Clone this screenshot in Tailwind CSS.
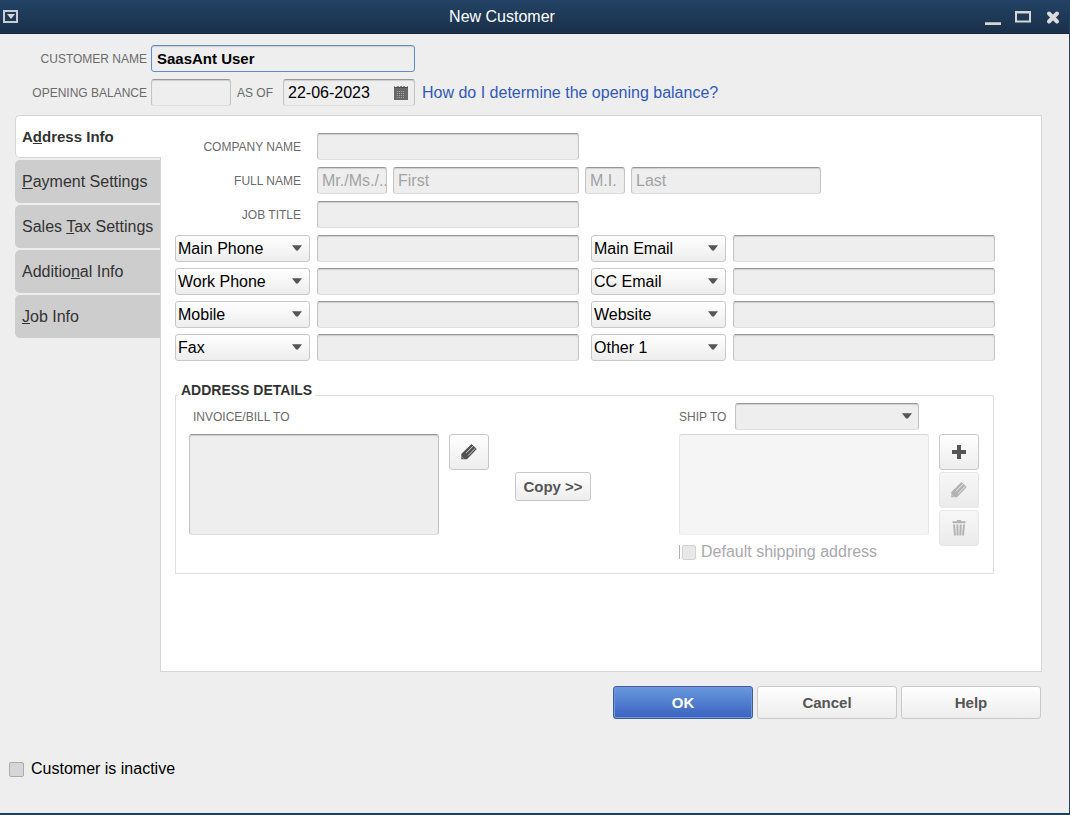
<!DOCTYPE html>
<html lang="en">
<head>
<meta charset="utf-8">
<meta name="viewport" content="width=device-width, initial-scale=1">
<title>New Customer</title>
<script src="https://cdn.jsdelivr.net/npm/@tailwindcss/browser@4"></script>
</head>
<body class="min-h-screen flex flex-col bg-[#eeeeee] border-r border-r-[#20415f] border-b-2 border-b-[#20415f] font-['Liberation_Sans',Arial,sans-serif] text-base leading-5 text-black">
<svg class="hidden" aria-hidden="true">
  <symbol id="arrow" viewBox="0 0 10 6"><path d="M0 .3h10L6.300 5.100Q5 6.300 3.700 5.100z" fill="currentColor"/></symbol>
  <symbol id="pencil" viewBox="0 0 16 16">
    <path d="M10.500 0 15.800 5 6 15.300 .3 15.300 .3 10z" fill="currentColor"/>
    <path d="M5 9.200 11.800 2.300M7.200 11.500 14 4.500" stroke="#f6f6f6" stroke-width=".8" fill="none"/>
    <path d="M.5 12.500 3 15.200" stroke="#f6f6f6" stroke-width=".4" fill="none"/>
  </symbol>
</svg>

<header class="h-[34px] flex items-center pl-[3px] pr-2 bg-linear-to-b from-[#234366] to-[#1a3049] border-b border-b-[#1c2748] text-[#d6d6d6]">
  <button type="button" aria-label="Window menu" class="w-4 h-[13px] -mt-px"><svg class="w-4 h-[13px]" viewBox="0 0 16 13"><rect x="1" y="1" width="13" height="11" fill="none" stroke="#c9ccd0" stroke-width="2"/><path d="M4 4h8L8 9z" fill="#d6d6d6"/></svg></button>
  <h1 class="flex-1 text-center text-white">New Customer</h1>
  <div class="flex items-center gap-[14px]">
    <button type="button" aria-label="Minimize"><svg class="w-4 h-4" viewBox="0 0 16 16"><path d="M0 13h16v3H0z" fill="#d6d6d6"/><path d="M0 13h16v1H0z" fill="#a9abad"/></svg></button>
    <button type="button" aria-label="Maximize"><svg class="w-4 h-4" viewBox="0 0 16 16"><path d="M1 3.500h14v9H1z" fill="none" stroke="#d6d6d6" stroke-width="2"/><path d="M0 2h16v2H0z" fill="#d6d6d6"/></svg></button>
    <button type="button" aria-label="Close"><svg class="w-4 h-4" viewBox="0 0 16 16"><path d="M4 4.500 12 12.500M12 4.500 4 12.500" stroke="#dcdcdc" stroke-width="4" stroke-linecap="round"/></svg></button>
  </div>
</header>

<form class="flex-1 flex flex-col">
  <div class="flex flex-col gap-[7px] pt-[11px] pb-[9px]">
    <div class="flex items-center">
      <label for="cust" class="w-[147px] mr-1 text-right text-xs text-[#6b6b6b]">CUSTOMER NAME</label>
      <input id="cust" type="text" value="SaasAnt User" class="w-[264px] h-[27px] px-[5px] rounded-[3px] border border-[#5f8bcf] bg-[#eeeeee] text-[15px] font-bold shadow-[inset_0_1px_1px_#cfcfcf] outline-none">
    </div>
    <div class="flex items-center">
      <label for="bal" class="w-[147px] mr-1 text-right text-xs text-[#6b6b6b]">OPENING BALANCE</label>
      <input id="bal" type="text" class="w-20 h-[27px] px-1 rounded-[3px] border border-[#c4c4c4] border-t-[#979797] border-b-[#dedede] shadow-[inset_0_1px_1px_#cfcfcf]">
      <label for="asof" class="w-[52px] pl-[6px] text-xs text-[#6b6b6b]">AS OF</label>
      <div class="w-[132px] h-[27px] flex items-center pl-1 pr-[6px] rounded-[3px] border border-[#c4c4c4] border-t-[#979797] border-b-[#dedede] shadow-[inset_0_1px_1px_#cfcfcf]">
        <input id="asof" type="text" value="22-06-2023" class="flex-1 min-w-0 h-full outline-none">
        <button type="button" aria-label="Choose date"><svg class="w-[14px] h-[14px]" viewBox="0 0 14 14"><path d="M0 1h14v13H0z" fill="#686868"/><path d="M0 0h1v1H0zM3 0h2v1H3zM6 0h2v1H6zM9 0h2v1H9zM13 0h1v1h-1z" fill="#8b8b8b"/><path d="M0 1h14v1H0z" fill="#4f4f4f"/><path d="M3 5.500h8M3 7.500h8M3 9.500h8M3 11.500h8" stroke="#a0a0a0" stroke-width="1" stroke-dasharray="1 1"/></svg></button>
      </div>
      <a href="#" class="ml-[7px] text-[#3159bd]">How do I determine the opening balance?</a>
    </div>
  </div>

  <div class="flex pl-[15px] pr-[27px]">
    <nav aria-label="Customer sections" class="w-[146px] -mr-px z-10 flex flex-col gap-[2px] text-[#333333]">
      <button type="button" class="h-[43px] pl-[6px] text-left text-[15px] font-bold rounded-l-[5px] bg-white border border-[#d6d6d6] border-r-0">A<u>d</u>dress Info</button>
      <button type="button" class="h-[43px] pl-[7px] text-left rounded-l-[5px] bg-[#cdcdcd] border-r border-r-[#d6d6d6]"><u>P</u>ayment Settings</button>
      <button type="button" class="h-[43px] pl-[7px] text-left rounded-l-[5px] bg-[#cdcdcd] border-r border-r-[#d6d6d6]">Sales <u>T</u>ax Settings</button>
      <button type="button" class="h-[43px] pl-[7px] text-left rounded-l-[5px] bg-[#cdcdcd] border-r border-r-[#d6d6d6]">Additio<u>n</u>al Info</button>
      <button type="button" class="h-[43px] pl-[7px] text-left rounded-l-[5px] bg-[#cdcdcd] border-r border-r-[#d6d6d6]"><u>J</u>ob Info</button>
    </nav>

    <section class="flex-1 min-w-0 bg-white border border-[#d6d6d6] pt-[17px] pl-[14px] pr-[46px] pb-[97px]">
      <div class="flex flex-col gap-[7px]">
        <div class="grid grid-cols-2 gap-x-3">
          <div class="flex items-center gap-[7px]">
            <label for="company" class="w-[135px] pr-[9px] text-right text-xs text-[#6b6b6b]">COMPANY NAME</label>
            <input id="company" type="text" class="flex-1 min-w-0 h-[27px] px-1 rounded-[3px] bg-[#eeeeee] border border-[#c4c4c4] border-t-[#979797] border-b-[#dedede] shadow-[inset_0_1px_1px_#cfcfcf]">
          </div>
        </div>
        <div class="grid grid-cols-2 gap-x-3">
          <div class="flex items-center gap-[7px]">
            <label for="first" class="w-[135px] pr-[9px] text-right text-xs text-[#6b6b6b]">FULL NAME</label>
            <div class="flex-1 min-w-0 flex gap-[6px]">
              <input type="text" aria-label="Title" placeholder="Mr./Ms./.." class="w-[70px] h-[27px] pl-1 rounded-[3px] bg-[#eeeeee] border border-[#c4c4c4] border-t-[#979797] border-b-[#dedede] shadow-[inset_0_1px_1px_#cfcfcf] placeholder:text-[#a3a3a3]">
              <input id="first" type="text" placeholder="First" class="flex-1 min-w-0 h-[27px] px-1 rounded-[3px] bg-[#eeeeee] border border-[#c4c4c4] border-t-[#979797] border-b-[#dedede] shadow-[inset_0_1px_1px_#cfcfcf] placeholder:text-[#a3a3a3]">
            </div>
          </div>
          <div class="flex gap-[6px] -ml-[6px]">
            <input type="text" aria-label="Middle initial" placeholder="M.I." class="w-10 h-[27px] px-1 rounded-[3px] bg-[#eeeeee] border border-[#c4c4c4] border-t-[#979797] border-b-[#dedede] shadow-[inset_0_1px_1px_#cfcfcf] placeholder:text-[#a3a3a3]">
            <input type="text" aria-label="Last name" placeholder="Last" class="w-[190px] h-[27px] px-1 rounded-[3px] bg-[#eeeeee] border border-[#c4c4c4] border-t-[#979797] border-b-[#dedede] shadow-[inset_0_1px_1px_#cfcfcf] placeholder:text-[#a3a3a3]">
          </div>
        </div>
        <div class="grid grid-cols-2 gap-x-3">
          <div class="flex items-center gap-[7px]">
            <label for="job" class="w-[135px] pr-[9px] text-right text-xs text-[#6b6b6b]">JOB TITLE</label>
            <input id="job" type="text" class="flex-1 min-w-0 h-[27px] px-1 rounded-[3px] bg-[#eeeeee] border border-[#c4c4c4] border-t-[#979797] border-b-[#dedede] shadow-[inset_0_1px_1px_#cfcfcf]">
          </div>
        </div>

        <div class="grid grid-cols-2 gap-x-3 gap-y-[6px]">
          <div class="flex gap-[7px]">
            <div class="relative w-[135px]"><select aria-label="Contact type 1" class="appearance-none w-full h-[27px] pl-[2px] rounded-[3px] border border-[#c9c9c9] bg-linear-to-b from-white to-[#ededed]"><option>Main Phone</option></select><svg class="absolute right-2 top-[10px] w-[10px] h-[6px] text-[#555555] pointer-events-none"><use href="#arrow"/></svg></div>
            <input type="text" aria-label="Main Phone" class="flex-1 min-w-0 h-[27px] px-1 rounded-[3px] bg-[#eeeeee] border border-[#c4c4c4] border-t-[#979797] border-b-[#dedede] shadow-[inset_0_1px_1px_#cfcfcf]">
          </div>
          <div class="flex gap-[7px]">
            <div class="relative w-[135px]"><select aria-label="Contact type 2" class="appearance-none w-full h-[27px] pl-[2px] rounded-[3px] border border-[#c9c9c9] bg-linear-to-b from-white to-[#ededed]"><option>Main Email</option></select><svg class="absolute right-2 top-[10px] w-[10px] h-[6px] text-[#555555] pointer-events-none"><use href="#arrow"/></svg></div>
            <input type="text" aria-label="Main Email" class="flex-1 min-w-0 h-[27px] px-1 rounded-[3px] bg-[#eeeeee] border border-[#c4c4c4] border-t-[#979797] border-b-[#dedede] shadow-[inset_0_1px_1px_#cfcfcf]">
          </div>
          <div class="flex gap-[7px]">
            <div class="relative w-[135px]"><select aria-label="Contact type 3" class="appearance-none w-full h-[27px] pl-[2px] rounded-[3px] border border-[#c9c9c9] bg-linear-to-b from-white to-[#ededed]"><option>Work Phone</option></select><svg class="absolute right-2 top-[10px] w-[10px] h-[6px] text-[#555555] pointer-events-none"><use href="#arrow"/></svg></div>
            <input type="text" aria-label="Work Phone" class="flex-1 min-w-0 h-[27px] px-1 rounded-[3px] bg-[#eeeeee] border border-[#c4c4c4] border-t-[#979797] border-b-[#dedede] shadow-[inset_0_1px_1px_#cfcfcf]">
          </div>
          <div class="flex gap-[7px]">
            <div class="relative w-[135px]"><select aria-label="Contact type 4" class="appearance-none w-full h-[27px] pl-[2px] rounded-[3px] border border-[#c9c9c9] bg-linear-to-b from-white to-[#ededed]"><option>CC Email</option></select><svg class="absolute right-2 top-[10px] w-[10px] h-[6px] text-[#555555] pointer-events-none"><use href="#arrow"/></svg></div>
            <input type="text" aria-label="CC Email" class="flex-1 min-w-0 h-[27px] px-1 rounded-[3px] bg-[#eeeeee] border border-[#c4c4c4] border-t-[#979797] border-b-[#dedede] shadow-[inset_0_1px_1px_#cfcfcf]">
          </div>
          <div class="flex gap-[7px]">
            <div class="relative w-[135px]"><select aria-label="Contact type 5" class="appearance-none w-full h-[27px] pl-[2px] rounded-[3px] border border-[#c9c9c9] bg-linear-to-b from-white to-[#ededed]"><option>Mobile</option></select><svg class="absolute right-2 top-[10px] w-[10px] h-[6px] text-[#555555] pointer-events-none"><use href="#arrow"/></svg></div>
            <input type="text" aria-label="Mobile" class="flex-1 min-w-0 h-[27px] px-1 rounded-[3px] bg-[#eeeeee] border border-[#c4c4c4] border-t-[#979797] border-b-[#dedede] shadow-[inset_0_1px_1px_#cfcfcf]">
          </div>
          <div class="flex gap-[7px]">
            <div class="relative w-[135px]"><select aria-label="Contact type 6" class="appearance-none w-full h-[27px] pl-[2px] rounded-[3px] border border-[#c9c9c9] bg-linear-to-b from-white to-[#ededed]"><option>Website</option></select><svg class="absolute right-2 top-[10px] w-[10px] h-[6px] text-[#555555] pointer-events-none"><use href="#arrow"/></svg></div>
            <input type="text" aria-label="Website" class="flex-1 min-w-0 h-[27px] px-1 rounded-[3px] bg-[#eeeeee] border border-[#c4c4c4] border-t-[#979797] border-b-[#dedede] shadow-[inset_0_1px_1px_#cfcfcf]">
          </div>
          <div class="flex gap-[7px]">
            <div class="relative w-[135px]"><select aria-label="Contact type 7" class="appearance-none w-full h-[27px] pl-[2px] rounded-[3px] border border-[#c9c9c9] bg-linear-to-b from-white to-[#ededed]"><option>Fax</option></select><svg class="absolute right-2 top-[10px] w-[10px] h-[6px] text-[#555555] pointer-events-none"><use href="#arrow"/></svg></div>
            <input type="text" aria-label="Fax" class="flex-1 min-w-0 h-[27px] px-1 rounded-[3px] bg-[#eeeeee] border border-[#c4c4c4] border-t-[#979797] border-b-[#dedede] shadow-[inset_0_1px_1px_#cfcfcf]">
          </div>
          <div class="flex gap-[7px]">
            <div class="relative w-[135px]"><select aria-label="Contact type 8" class="appearance-none w-full h-[27px] pl-[2px] rounded-[3px] border border-[#c9c9c9] bg-linear-to-b from-white to-[#ededed]"><option>Other 1</option></select><svg class="absolute right-2 top-[10px] w-[10px] h-[6px] text-[#555555] pointer-events-none"><use href="#arrow"/></svg></div>
            <input type="text" aria-label="Other 1" class="flex-1 min-w-0 h-[27px] px-1 rounded-[3px] bg-[#eeeeee] border border-[#c4c4c4] border-t-[#979797] border-b-[#dedede] shadow-[inset_0_1px_1px_#cfcfcf]">
          </div>
        </div>
      </div>

      <fieldset class="mt-[22px] mr-px pl-[13px] pr-[14px] pb-[11px] border border-[#dfdfdf]">
        <legend class="-ml-[11px] px-[3px] pb-[10px] text-sm leading-[14px] font-bold text-[#333333]">ADDRESS DETAILS</legend>
        <div class="-mt-1 flex items-start">
          <div>
            <label for="bill" class="h-[27px] mb-1 pl-1 flex items-center text-xs text-[#6b6b6b]">INVOICE/BILL TO</label>
            <textarea id="bill" class="block w-[250px] h-[101px] p-1 resize-none rounded-[3px] bg-[#eeeeee] border border-[#c4c4c4] border-t-[#979797] border-b-[#dedede] shadow-[inset_0_1px_1px_#cfcfcf]"></textarea>
          </div>
          <button type="button" aria-label="Edit billing address" class="mt-[31px] ml-[10px] w-10 h-9 flex items-center justify-center rounded-[3px] border border-[#c9c9c9] bg-linear-to-b from-white to-[#ededed] text-[#505050]"><svg class="w-4 h-4"><use href="#pencil"/></svg></button>
          <button type="button" class="mt-[69px] ml-[26px] w-[76px] h-[29px] rounded-[3px] border border-[#c9c9c9] bg-linear-to-b from-white to-[#ededed] text-[15px] font-bold text-[#555555]">Copy &gt;&gt;</button>
          <div class="ml-auto">
            <div class="h-[27px] mb-1 flex items-center">
              <label for="ship" class="w-14 text-xs text-[#6b6b6b]">SHIP TO</label>
              <div class="relative w-[184px]"><select id="ship" class="appearance-none block w-full h-[27px] pl-[2px] rounded-[3px] bg-[#eeeeee] border border-[#c4c4c4] border-t-[#979797] border-b-[#dedede] shadow-[inset_0_1px_1px_#cfcfcf]"><option></option></select><svg class="absolute right-[7px] top-[10px] w-[10px] h-[6px] text-[#555555] pointer-events-none"><use href="#arrow"/></svg></div>
            </div>
            <textarea aria-label="Shipping address" disabled class="block w-[250px] h-[101px] p-1 resize-none rounded-[3px] bg-[#f5f5f5] border border-[#e6e6e6] border-t-[#d5d5d5] border-b-[#eeeeee]"></textarea>
            <label class="mt-[7px] flex items-center text-[#a9a9ad]"><span class="w-px h-[14px] mr-[2px] bg-[#b0b0b0]"></span><input type="checkbox" disabled class="appearance-none w-[14px] h-[15px] mr-[5px] rounded-[2px] border border-[#d3d3d3] bg-[#e8e8e8]">Default shipping address</label>
          </div>
          <div class="mt-[31px] ml-[10px] flex flex-col gap-[2px]">
            <button type="button" aria-label="Add shipping address" class="w-10 h-9 flex items-center justify-center rounded-[3px] border border-[#c9c9c9] bg-linear-to-b from-white to-[#ededed]"><svg class="w-[14px] h-[14px]" viewBox="0 0 14 14"><path d="M5 0h4v5h5v4H9v5H5V9H0V5h5z" fill="#555555"/></svg></button>
            <button type="button" aria-label="Edit shipping address" disabled class="w-10 h-9 flex items-center justify-center rounded-[3px] border border-[#e6e6e6] bg-linear-to-b from-[#f7f7f7] to-[#ebebeb] text-[#b3b3b3]"><svg class="w-4 h-4"><use href="#pencil"/></svg></button>
            <button type="button" aria-label="Delete shipping address" disabled class="w-10 h-9 flex items-center justify-center rounded-[3px] border border-[#e6e6e6] bg-linear-to-b from-[#f7f7f7] to-[#ebebeb]"><svg class="w-[14px] h-4" viewBox="0 0 14 16"><path d="M5 0h4v1.300h4.500v2H.5v-2H5z" fill="#b3b3b3"/><path d="M2 4.500 3 15.500M5.300 4.500 5.700 15.500M8.700 4.500 8.300 15.500M12 4.500 11 15.500" stroke="#b3b3b3" stroke-width="2"/></svg></button>
          </div>
        </div>
      </fieldset>
    </section>
  </div>

  <div class="mt-[14px] pr-7 flex justify-end gap-1 text-[15px] font-bold text-[#555555]">
    <button type="submit" class="w-[140px] h-[33px] rounded-[3px] border border-[#3c5c9c] bg-linear-to-b from-[#6a98dd] to-[#3a62bf] shadow-[inset_0_0_0_1px_#6f97dc] text-white">OK</button>
    <button type="button" class="w-[140px] h-[33px] rounded-[3px] border border-[#c9c9c9] bg-linear-to-b from-white to-[#ededed]">Cancel</button>
    <button type="button" class="w-[140px] h-[33px] rounded-[3px] border border-[#c9c9c9] bg-linear-to-b from-white to-[#ededed]">Help</button>
  </div>

  <label class="mt-10 ml-[9px] self-start flex items-center"><input type="checkbox" class="appearance-none w-[15px] h-[15px] mr-[7px] rounded-[2px] border border-[#ababab] bg-[#d6d6d6]">Customer is inactive</label>
</form>
</body>
</html>
